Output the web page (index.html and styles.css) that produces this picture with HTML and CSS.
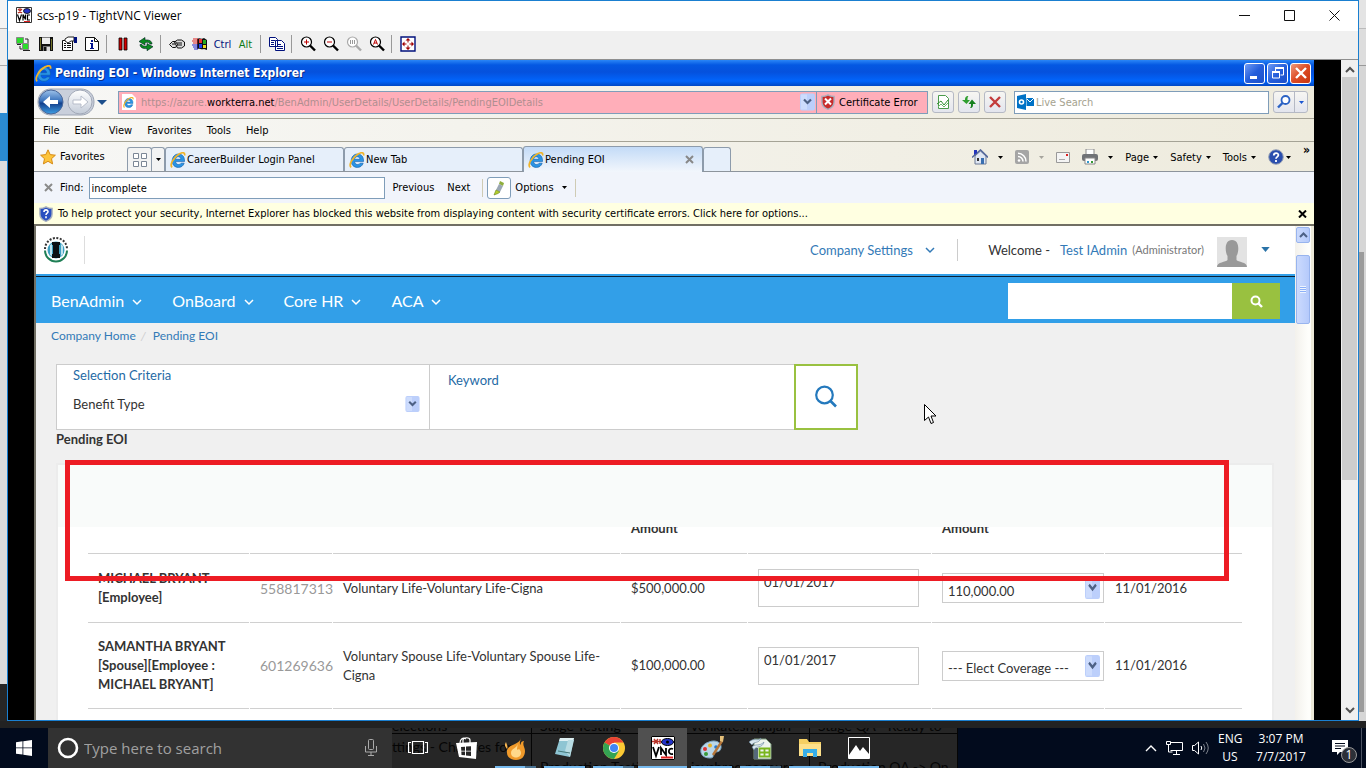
FILE: index.html
```html
<!DOCTYPE html>
<html lang="en">
<head>
    <meta charset="UTF-8">
    <meta name="viewport" content="width=device-width, initial-scale=1.0">
    <title>scs-p19 - TightVNC Viewer</title>
    <link rel="stylesheet" href="styles.css">
</head>
<body>
    <svg width="0" height="0" class="defs">
        <defs>
            <linearGradient id="g-ball" x1="0" y1="0" x2="0" y2="1"><stop offset="0" stop-color="#9fc3ea"/><stop offset=".45" stop-color="#3a73bd"/><stop offset=".55" stop-color="#123f8c"/><stop offset="1" stop-color="#3fa0e6"/></linearGradient>
            <linearGradient id="g-grey" x1="0" y1="0" x2="0" y2="1"><stop offset="0" stop-color="#fff"/><stop offset="1" stop-color="#c3cbd8"/></linearGradient>
        </defs>
        <symbol id="ie" viewBox="0 0 16 16">
            <path d="M14.500 9.600H5.600c.2 2.100 1.500 2.900 3 2.900 1.300 0 2.100-.5 2.500-1.300h3.100c-.9 2.700-2.900 4.200-5.800 4.200-3.800 0-6.200-2.700-6.200-6.500S4.700 2 8.400 2c3.900 0 6.500 2.800 6.100 7.600zM5.600 7.300h5.300C10.800 5.700 9.800 4.700 8.300 4.700S5.800 5.700 5.600 7.300z" fill="#2a94e4" stroke="#0e5cab" stroke-width=".6"/>
            <path d="M2.200 15.200C-1 13.500 3.500 5 9.500 1.800c3.200-1.700 5.800-1.500 5 1.700" fill="none" stroke="#f0b429" stroke-width="1.700"/>
        </symbol>
        <symbol id="chev" viewBox="0 0 10 10"><path d="M1 3l4 4 4-4" fill="none" stroke="currentColor" stroke-width="1.500"/></symbol>
        <symbol id="xpdown" viewBox="0 0 15 17">
            <rect x="0" y="0" width="15" height="17" rx="2" fill="#bccffb"/><rect x="1" y="1" width="6" height="15" fill="#cddcfd"/>
            <path d="M4 6l3.500 3.500L11 6" fill="none" stroke="#4d6185" stroke-width="2.200"/>
        </symbol>
        <symbol id="tri" viewBox="0 0 5 3"><path d="M0 0h5L2.500 3z" fill="currentColor"/></symbol>
        <symbol id="shield" viewBox="0 0 14 16">
            <path d="M7 .8C5 2 3 2.400.9 2.400V8c0 3.500 2.500 6 6.100 7.300C10.600 14 13.100 11.500 13.100 8V2.400C11 2.400 9 2 7 .8z" fill="currentColor" stroke="#a9b1bf" stroke-width="1.400"/>
        </symbol>
        <symbol id="lens" viewBox="0 0 16 16">
            <circle cx="6.500" cy="6" r="5" fill="#fff" stroke="currentColor" stroke-width="1.200"/><path d="M10 9.500l5 5" stroke="currentColor" stroke-width="2.400"/>
        </symbol>
    </svg>

    <div class="desktop">
        <div class="behind left"></div>

        <div class="vnc">
            <header class="vnc-title">
                <svg width="16" height="16" viewBox="0 0 16 16"><rect width="16" height="16" fill="#fff"/><path d="M.5.500h15v15H.5z" fill="none" stroke="#333"/><path d="M2 2l4 4M6 2L2 6M4 1v5" stroke="#b8342a" stroke-width="1.200"/><ellipse cx="11" cy="4" rx="3.500" ry="2.500" fill="#2433c8" stroke="#000" stroke-width=".8"/><path d="M1.500 7.500l2 6 2-6M7 13.500v-6l2.500 5v-5M14 8h-2.500v5H14" fill="none" stroke="#000" stroke-width="1.200"/><path d="M8 14.500h6" stroke="#e02020"/></svg>
                <span>scs-p19 - TightVNC Viewer</span>
                <div class="win-buttons">
                    <button aria-label="Minimize"><svg width="11" height="11"><path d="M0 5.500h11" stroke="#111"/></svg></button>
                    <button aria-label="Maximize"><svg width="11" height="11"><path d="M.5.500h10v10H.5z" fill="none" stroke="#111"/></svg></button>
                    <button aria-label="Close"><svg width="11" height="11"><path d="M.5.500l10 10M10.500.500l-10 10" stroke="#111"/></svg></button>
                </div>
            </header>

            <div class="vnc-tools">
                <button aria-label="New connection"><svg width="16" height="16"><path d="M1.500 1.500h7v6h-7zM7.500 7.500h6v6h-6z" fill="#2bdc2b" stroke="#888"/><path d="M2 8.500h4M10 3h3v4M5 10v3h2M8 14.500h7" fill="none" stroke="#222"/></svg></button>
                <button aria-label="Save"><svg width="16" height="16"><path d="M1 1h14v14H1z" fill="#111"/><path d="M4 1.500h8V8H4z" fill="#eee"/><path d="M2.500 2v12M13.500 3v11" stroke="#75752c"/><path d="M5 10.500h7V15H5z" fill="#ddd"/><path d="M5.500 11h3v4h-3z" fill="#111"/></svg></button>
                <button aria-label="Options"><svg width="16" height="16"><path d="M1.500 4.500h10v10h-10z" fill="#fff" stroke="#111"/><path d="M3 7.500h2M6 7.500h4M3 9.500h2M6 9.500h4M3 11.500h2M6 11.500h4" stroke="#111"/><path d="M4 3l3-2h6v4h-3L7 7 4 5z" fill="#fff" stroke="#222"/><path d="M13 1h3v6h-3z" fill="#00107c"/></svg></button>
                <button aria-label="Info"><svg width="16" height="16"><path d="M1.500 1.500h9l4 4v9h-13z" fill="#fff" stroke="#111"/><path d="M10.500 1.500v4h4" fill="none" stroke="#111"/><path d="M7 4h2v2H7zM6 7h3v5h1v1H6v-1h1V8H6z" fill="#00108c"/></svg></button>
                <span class="sep"></span>
                <button aria-label="Pause"><svg width="16" height="16"><path d="M4 2h3v12H4zM9 2h3v12H9z" fill="#d40000" stroke="#000" stroke-width=".8"/></svg></button>
                <button aria-label="Refresh"><svg width="16" height="16"><path d="M14 8c0-3-3-4.500-7-4V1.500L1 5.500 7 9V6.500c3-.4 4.500 0 5 1.500z" fill="#0a8a1e" stroke="#022" stroke-width=".6"/><path d="M2 8.500c0 3 3 4.500 7 4v2.200l6-4L9 7.500V10c-3 .4-4.500 0-5-1.500z" fill="#0a8a1e" stroke="#022" stroke-width=".6"/></svg></button>
                <span class="sep"></span>
                <button aria-label="Ctrl-Alt-Del"><svg width="16" height="16"><path d="M.5 8.500l3-3h3l2 3-2 3h-3zM5.500 6l3-2h4l3 2v4l-3 2h-4z" fill="#ddd" stroke="#111"/><path d="M8 7h5M8 9h5M3 8h3" stroke="#111"/></svg></button>
                <button aria-label="Ctrl-Esc"><svg width="16" height="16"><path d="M5 3c3-2 4 1 7-1l3 2v10l-3-1c-3 1-4-1-7 0z" fill="#111"/><path d="M7 3h3v4H7z" fill="#e33"/><path d="M11 4h3v4h-3z" fill="#2a2"/><path d="M7 8h3v4H7z" fill="#24e"/><path d="M11 9h3v3h-3z" fill="#ed2"/><path d="M1 3h5M0 5h6M1 7h5" stroke="#d22"/><path d="M0 9h6M1 11h5M2 13h4" stroke="#22c"/></svg></button>
                <button class="ctrl">Ctrl</button>
                <button class="alt">Alt</button>
                <span class="sep"></span>
                <button aria-label="Transfer files"><svg width="18" height="16"><path d="M1.500 1.500h6l2 2v7h-8zM7.500 4.500h6l3 3v7h-9z" fill="#fff" stroke="#00107c"/><path d="M3 4.500h4M3 6.500h3M3 8.500h3M9 8.500h4M9 10.500h6M9 12.500h6" stroke="#00107c"/></svg></button>
                <span class="sep"></span>
                <button aria-label="Zoom in"><svg width="16" height="16"><use href="#lens"/><path d="M4 6h5M6.500 3.500v5" stroke="#b00"/></svg></button>
                <button aria-label="Zoom out"><svg width="16" height="16"><use href="#lens"/><path d="M4 6h5" stroke="#b00"/></svg></button>
                <button class="off" aria-label="Zoom 100%"><svg width="16" height="16"><use href="#lens"/><path d="M4.500 4v4M6.500 4v4M8.500 4v4" stroke="#999"/></svg></button>
                <button aria-label="Zoom auto"><svg width="16" height="16"><use href="#lens"/><path d="M4.500 8.500l2-5 2 5M5 7h3" fill="none" stroke="#b00"/></svg></button>
                <span class="sep"></span>
                <button aria-label="Full screen"><svg width="16" height="16"><path d="M1 1h14v14H1z" fill="#fff" stroke="#00107c" stroke-width="1.400"/><path d="M8 2l2.500 2.500h-5zM8 14l2.500-2.500h-5zM2 8l2.500-2.500v5zM14 8l-2.500-2.500v5z" fill="#a00000"/><path d="M8 4v2.500M8 9.500V12M4 8h2.500M9.500 8H12" stroke="#a00000"/></svg></button>
            </div>

            <div class="vnc-view">
                <div class="remote">
                    <div class="ie-title">
                        <svg width="17" height="17"><use href="#ie"/></svg>
                        <b>Pending EOI - Windows Internet Explorer</b>
                        <div class="xp-buttons">
                            <button aria-label="Minimize"><svg width="20" height="20"><path d="M5 13h7v3H5z" fill="#fff"/></svg></button>
                            <button aria-label="Restore"><svg width="20" height="20"><path d="M7.500 8V5h8v7h-3M4.500 9h7v6h-7z" fill="none" stroke="#fff"/><path d="M4 9h8M7 5h9" stroke="#fff" stroke-width="2"/></svg></button>
                            <button class="close" aria-label="Close"><svg width="20" height="20"><path d="M5 5l10 10M15 5L5 15" stroke="#fff" stroke-width="2.400"/></svg></button>
                        </div>
                    </div>

                    <div class="ie-address">
                        <svg width="82" height="28" viewBox="0 0 82 28">
                            <path d="M14 1h30c7 0 13 5 13 13s-6 13-13 13H14C7 27 1 22 1 14S7 1 14 1z" fill="#c9cfdb" stroke="#9da5b4"/>
                            <circle cx="14" cy="14" r="12" fill="url(#g-ball)" stroke="#4a6799"/><circle cx="43" cy="14" r="12" fill="url(#g-grey)" stroke="#a2a9b8"/>
                            <path d="M6 14l7-6v4h8v4h-8v4z" fill="#fff"/>
                            <path d="M51 14l-7-6v4h-8v4h8v4z" fill="#fff" stroke="#b7bdca"/>
                            <path d="M60 12h10l-5 5z" fill="#1d4f8c"/>
                        </svg>
                        <div class="url">
                            <svg width="16" height="16"><path d="M1 0h10l4 4v12H1z" fill="#fff"/><use href="#ie" x="2" y="3" width="11" height="11"/></svg>
                            <span class="url-text">https://azure.<b>workterra.net</b>/BenAdmin/UserDetails/UserDetails/PendingEOIDetails</span>
                            <button aria-label="Show addresses"><svg width="15" height="18"><use href="#xpdown"/></svg></button>
                        </div>
                        <div class="cert">
                            <svg width="14" height="16" color="#c92b2b"><use href="#shield"/><path d="M4 4.500l6 6M10 4.500l-6 6" stroke="#fff" stroke-width="2"/></svg>
                            <span>Certificate Error</span>
                        </div>
                        <button class="sq" aria-label="Compatibility view"><svg width="16" height="16"><path d="M3.500 1.500h7l3 3v10h-10z" fill="#fff" stroke="#4a9b4a"/><path d="M2 10l4-3 3 4 4-5" fill="none" stroke="#2f8f2f"/><path d="M3 13l3-3 3 3 4-4" fill="none" stroke="#71b971"/></svg></button>
                        <button class="sq" aria-label="Refresh"><svg width="16" height="16"><path d="M7.500 2C4.500 2 4 4 4 6H1l4.500 4L9 6H6.500c0-2 0-3 1-4z" fill="#2f9f2f"/><path d="M9 14c3 0 3-2 3-4h3l-4-4.500L7.500 10H10c0 2 0 3-1 4z" fill="#17801f"/></svg></button>
                        <button class="sq" aria-label="Stop"><svg width="16" height="16"><path d="M3 3l10 10M13 3L3 13" stroke="#c33c3c" stroke-width="2.400"/></svg></button>
                        <label class="live">
                            <svg width="17" height="16"><path d="M0 2l9-2v16l-9-2z" fill="#0072c6"/><path d="M9.500 4H17v8H9.500z" fill="#0072c6"/><path d="M10 5l3 3 4-4" fill="none" stroke="#fff"/><circle cx="4.500" cy="8" r="2" fill="none" stroke="#fff" stroke-width="1.600"/></svg>
                            <input type="text" placeholder="Live Search" aria-label="Live Search">
                        </label>
                        <div class="go">
                            <button aria-label="Search"><svg width="16" height="16"><circle cx="9.500" cy="6" r="4" fill="#fff" stroke="#2b62c4" stroke-width="1.800"/><path d="M6.500 9L2 13.500" stroke="#2b62c4" stroke-width="2.400"/></svg></button>
                            <button aria-label="Search options"><svg width="5" height="3" color="#1c57d1"><use href="#tri"/></svg></button>
                        </div>
                    </div>

                    <nav class="ie-menu">
                        <a href="#">File</a><a href="#">Edit</a><a href="#">View</a><a href="#">Favorites</a><a href="#">Tools</a><a href="#">Help</a>
                    </nav>

                    <div class="ie-tabs">
                        <button class="fav"><svg width="16" height="16"><path d="M8 .8l2.200 4.800 5.200.6-3.900 3.500 1.100 5.200L8 12.300l-4.600 2.600 1.100-5.200L.6 6.200l5.200-.6z" fill="#fdc43a" stroke="#d68a14"/></svg>Favorites</button>
                        <button class="quick" aria-label="Quick tabs"><svg width="16" height="14"><path d="M1.500.5h5v5h-5zM9.500.5h5v5h-5zM1.500 8.500h5v5h-5zM9.500 8.500h5v5h-5z" fill="#fff" stroke="#7b8796"/></svg></button>
                        <button class="quick-more" aria-label="Tab list"><svg width="5" height="3"><use href="#tri"/></svg></button>
                        <a class="tab" href="#"><svg width="16" height="16"><use href="#ie"/></svg>CareerBuilder Login Panel</a>
                        <a class="tab" href="#"><svg width="16" height="16"><use href="#ie"/></svg>New Tab</a>
                        <a class="tab active" href="#"><svg width="16" height="16"><use href="#ie"/></svg>Pending EOI<svg class="tab-x" width="9" height="9"><path d="M1 1l7 7M8 1L1 8" stroke="#888" stroke-width="2"/></svg></a>
                        <button class="new-tab" aria-label="New tab"></button>
                        <div class="commands">
                            <button aria-label="Home"><svg width="16" height="16"><path d="M3 7v8h11V7L8.500 2z" fill="#dfe6f2" stroke="#6d7b96"/><path d="M0 8.500L8.500 1 16 8.500" fill="none" stroke="#55699c" stroke-width="1.600"/><path d="M2 1h3v3L2 6z" fill="#2233bb"/><path d="M9 9h3v6H9z" fill="#3a6fb0"/><path d="M5 9h2v3H5z" fill="#333"/></svg><svg width="5" height="3"><use href="#tri"/></svg></button>
                            <button class="faded" aria-label="Feeds"><svg width="14" height="14"><rect width="14" height="14" rx="2" fill="#a5a5a5"/><circle cx="4" cy="10.500" r="1.300" fill="#fff"/><path d="M3 6.500a5 5 0 015 5M3 3.300a8 8 0 018 8.200" fill="none" stroke="#fff" stroke-width="1.500"/></svg><svg width="5" height="3"><use href="#tri"/></svg></button>
                            <button aria-label="Read mail"><svg width="14" height="11"><path d="M.5.500h13v10H.5z" fill="#f4f4f4" stroke="#999"/><path d="M10 2h2v2h-2z" fill="#d22"/><path d="M3 7.500h6" stroke="#aaa"/></svg></button>
                            <button aria-label="Print"><svg width="16" height="16"><path d="M4 0h8v6H4z" fill="#fff" stroke="#888"/><rect y="5" width="16" height="7" rx="2" fill="#707276"/><path d="M3 9h10v6H3z" fill="#fff" stroke="#888"/><path d="M5 12h2v2H5z" fill="#39c"/><path d="M9 12h2v2H9z" fill="#393"/></svg><svg width="5" height="3"><use href="#tri"/></svg></button>
                            <button>Page<svg width="5" height="3"><use href="#tri"/></svg></button>
                            <button>Safety<svg width="5" height="3"><use href="#tri"/></svg></button>
                            <button>Tools<svg width="5" height="3"><use href="#tri"/></svg></button>
                            <button class="help" aria-label="Help"><svg width="16" height="16"><circle cx="8" cy="8" r="7.300" fill="#2b4fae" stroke="#9aa3b5"/><path d="M5.800 6.500c0-3 4.600-3 4.600-.4C10.400 8 8 7.800 8 9.800M8 11v2" fill="none" stroke="#fff" stroke-width="1.800"/></svg><svg width="5" height="3"><use href="#tri"/></svg></button>
                            <b class="more">»</b>
                        </div>
                    </div>

                    <div class="ie-find">
                        <button aria-label="Close find bar"><svg width="9" height="9"><path d="M1 1l7 7M8 1L1 8" stroke="#8b8b8b" stroke-width="2"/></svg></button>
                        <label for="find">Find:</label>
                        <input id="find" type="text" value="incomplete">
                        <button class="prev">Previous</button>
                        <button class="next">Next</button>
                        <button class="pen" aria-label="Highlight"><svg width="16" height="16"><path d="M9 1l4 2-1 3-4-2z" fill="#8fae3c"/><path d="M8 4l4 2-3 6-4-2z" fill="#9aa7b3"/><path d="M5 10l4 2-2 1.500L3 15z" fill="#b4cf2c" stroke="#66811a" stroke-width=".6"/></svg></button>
                        <button class="opts">Options<svg width="5" height="3"><use href="#tri"/></svg></button>
                    </div>

                    <div class="ie-info">
                        <svg width="14" height="16" color="#2a50c0"><use href="#shield"/><path d="M5 6c0-2.800 4-2.800 4-.3C9 7.300 7 7.200 7 9M7 10.300v2" fill="none" stroke="#fff" stroke-width="1.600"/></svg>
                        <span>To help protect your security, Internet Explorer has blocked this website from displaying content with security certificate errors. Click here for options...</span>
                        <button aria-label="Close"><svg width="9" height="8"><path d="M1 .5l7 7M8 .5l-7 7" stroke="#000" stroke-width="2"/></svg></button>
                    </div>

                    <div class="ie-body">
                        <main class="page">
                            <header class="site-top">
                                <svg class="logo" width="26" height="26" viewBox="0 0 26 26"><circle cx="13" cy="13" r="11" fill="#fff"/><circle cx="13" cy="13" r="8.500" fill="#3d9fc0"/><path d="M2 12a11 11 0 0122 0" fill="none" stroke="#333" stroke-width="2" stroke-dasharray="2 1.500"/><path d="M2 13.500a11 11 0 0022 0" fill="none" stroke="#1f7f56" stroke-width="2"/><path d="M7 8l2-1v12l-2-1zM18 7l2 2v8l-2 2z" fill="#bfe3ef"/><path d="M9 5h8v3h-1v9h1v4H9v-4h1V8H9z" fill="#0c1014"/></svg>
                                <div class="account">
                                    <a class="company" href="#">Company Settings <svg width="10" height="10"><use href="#chev"/></svg></a>
                                    <span class="welcome">Welcome -</span>
                                    <a href="#">Test IAdmin</a>
                                    <small>(Administrator)</small>
                                    <svg class="avatar" width="30" height="30" viewBox="0 0 30 30"><rect width="30" height="30" fill="#e3e3e3"/><path d="M0 30c0-5 9-5 10.500-7v-4C8 15 7 3 15 3s7 12 4.500 16v4C21 25 30 25 30 30z" fill="#999"/></svg>
                                    <svg width="9" height="5" color="#2a73a8"><use href="#tri"/></svg>
                                </div>
                            </header>

                            <nav class="site-nav">
                                <a href="#">BenAdmin <svg width="10" height="10"><use href="#chev"/></svg></a>
                                <a href="#">OnBoard <svg width="10" height="10"><use href="#chev"/></svg></a>
                                <a href="#">Core HR <svg width="10" height="10"><use href="#chev"/></svg></a>
                                <a href="#">ACA <svg width="10" height="10"><use href="#chev"/></svg></a>
                                <form class="site-search">
                                    <input type="text" aria-label="Search site">
                                    <button type="button" aria-label="Search"><svg width="13" height="13"><circle cx="5.500" cy="5.500" r="4" fill="none" stroke="#fff" stroke-width="2"/><path d="M8.500 8.500l3.500 3.500" stroke="#fff" stroke-width="2.400"/></svg></button>
                                </form>
                            </nav>

                            <div class="crumbs"><a href="#">Company Home</a><i>/</i><a href="#">Pending EOI</a></div>

                            <form class="filter">
                                <div class="criteria">
                                    <label for="criteria">Selection Criteria</label>
                                    <div class="pick">
                                        <select id="criteria"><option>Benefit Type</option></select>
                                        <svg width="15" height="16"><use href="#xpdown"/></svg>
                                    </div>
                                </div>
                                <div class="keyword">
                                    <label for="keyword">Keyword</label>
                                    <input id="keyword" type="text">
                                </div>
                                <button type="button" aria-label="Search"><svg width="24" height="24"><circle cx="10.500" cy="10" r="8.300" fill="none" stroke="#2479bd" stroke-width="2.200"/><path d="M16 15.500l6 6" stroke="#2479bd" stroke-width="2.600"/></svg></button>
                            </form>

                            <h2>Pending EOI</h2>

                            <section class="panel">
                                <div class="panel-head"></div>
                                <table>
                                    <colgroup><col class="c-name"><col class="c-id"><col><col class="c-amount"><col class="c-date"><col class="c-elect"><col class="c-sent"></colgroup>
                                    <thead>
                                        <tr><th></th><th></th><th></th><th>Amount</th><th></th><th>Amount</th><th></th></tr>
                                    </thead>
                                    <tbody>
                                        <tr>
                                            <td class="name">MICHAEL BRYANT [Employee]</td>
                                            <td class="id">558817313</td>
                                            <td>Voluntary Life-Voluntary Life-Cigna</td>
                                            <td>$500,000.00</td>
                                            <td><input type="text" value="01/01/2017" aria-label="Effective date"></td>
                                            <td class="elect"><div class="pick boxed"><select aria-label="Elected amount"><option>110,000.00</option></select><svg width="15" height="22" viewBox="0 0 15 17" preserveAspectRatio="none"><use href="#xpdown"/></svg></div></td>
                                            <td>11/01/2016</td>
                                        </tr>
                                        <tr>
                                            <td class="name">SAMANTHA BRYANT [Spouse][Employee : MICHAEL BRYANT]</td>
                                            <td class="id">601269636</td>
                                            <td>Voluntary Spouse Life-Voluntary Spouse Life-Cigna</td>
                                            <td>$100,000.00</td>
                                            <td><input type="text" value="01/01/2017" aria-label="Effective date"></td>
                                            <td class="elect"><div class="pick boxed"><select aria-label="Elected amount"><option>--- Elect Coverage ---</option></select><svg width="15" height="22" viewBox="0 0 15 17" preserveAspectRatio="none"><use href="#xpdown"/></svg></div></td>
                                            <td>11/01/2016</td>
                                        </tr>
                                    </tbody>
                                </table>
                                <div class="highlight"></div>
                            </section>

                            <svg class="cursor" width="13" height="21"><path d="M.5.500v16l4-3.500 2.500 6.500 2.500-1L7 12h5z" fill="#fff" stroke="#000"/></svg>
                        </main>
                        <div class="xp-scroll">
                            <button aria-label="Scroll up"><svg width="9" height="6"><path d="M1 5l3.500-3.500L8 5" fill="none" stroke="#4d6185" stroke-width="2"/></svg></button>
                            <div class="xp-thumb"></div>
                        </div>
                    </div>
                </div>

                <div class="vnc-scroll">
                    <svg width="10" height="7"><path d="M1 6l4-4 4 4" fill="none" stroke="#505050" stroke-width="2"/></svg>
                    <div class="vnc-thumb"></div>
                    <svg width="10" height="7"><path d="M1 1l4 4 4-4" fill="none" stroke="#505050" stroke-width="2"/></svg>
                </div>
            </div>
        </div>

        <div class="behind right"><div></div></div>
    </div>

    <footer class="taskbar">
        <button class="start" aria-label="Start"><svg width="16" height="16"><path d="M0 2.300l6.500-1v6.200H0zM7.300 1.200L16 0v7.500H7.300zM0 8.300h6.500v6.300L0 13.700zM7.300 8.300H16V16l-8.700-1.300z" fill="#fff"/></svg></button>
        <label class="search">
            <svg width="22" height="22"><circle cx="11" cy="11" r="9" fill="none" stroke="#fff" stroke-width="2.600"/></svg>
            <input type="text" placeholder="Type here to search">
            <svg width="12" height="18"><rect x="3.500" y=".5" width="5" height="10" rx="1" fill="none" stroke="#aaa"/><path d="M.5 7v6h11V7M6 13v4M3 16.500h6" fill="none" stroke="#aaa"/></svg>
        </label>
        <div class="apps">
            <div class="sheet" aria-hidden="true">
                <span>elections</span><span>Stage Testing</span><span>venkatesh.pujari</span><span>Stage QA - Ready to</span>
                <span>ttings - Changes for</span><span></span><span></span><span></span>
                <span></span><span>Production Testing</span><span>jayshree.nagpure</span><span>Production QA -&gt; On</span>
            </div>
            <button aria-label="Task view"><svg width="20" height="16"><path d="M4.500 1.500h11v12h-11zM3 2.500H.5v10H3M17 2.500h2.500v10H17" fill="none" stroke="#fff" stroke-width="1.200"/></svg></button>
            <button aria-label="Store"><svg width="22" height="24"><path d="M7 7V4c0-3 7-3 7 0v3M4 7c0-4 3-6 6-4" fill="none" stroke="#fff" stroke-width="1.200"/><path d="M0 7l21-1-1 17-17-2z" fill="#fff"/><path d="M5 11l4-.3v4H5.300zM10 10.600l5-.4v4.500h-5zM5.300 15.500H9v3.800L5.500 19zM10 15.500h5V20l-5-.6z" fill="#262626"/></svg></button>
            <button class="open more" aria-label="Burn"><svg width="22" height="24"><path d="M15 0c2 4-1 6-5 8-5 2-9 4-8 9 0 4 4 7 9 7 6 0 9-4 9-9 0-4-3-6-1-10-2 0-4 2-3 4-3-2 1-5-1-9z" fill="#f09a2a"/><path d="M1 6c-2 3-1 5 1 7 1-2 0-4-1-7z" fill="#f6b450"/><path d="M12 8c1 4-6 4-6 9 0 6 10 6 10 0 0-2-1-3-2-4-1 1-2 1-2 0 0-2 1-3 0-5z" fill="#ffd98a"/></svg></button>
            <button class="open" aria-label="Notepad"><svg width="22" height="22"><path d="M6 1h14l-4 19-15-3z" fill="#8ec5d3"/><path d="M6 1h14l-1 3H5z" fill="#dff0f3"/><path d="M14 3h6l-4 17-5-6z" fill="#b8dce3"/><path d="M4 14l12 2" stroke="#477"/></svg></button>
            <button class="open more" aria-label="Chrome"><svg width="22" height="22" viewBox="0 0 22 22"><circle cx="11" cy="11" r="11" fill="#fcc934"/><path d="M11 11L1.500 5.500A11 11 0 0120.500 5.500H11z" fill="#e94335"/><path d="M11 11L1.500 5.500A11 11 0 0011 22l4.800-8z" fill="#34a353"/><circle cx="11" cy="11" r="5" fill="#fff"/><circle cx="11" cy="11" r="4" fill="#4285f4"/></svg></button>
            <button class="open current" aria-label="TightVNC"><svg width="24" height="24"><rect width="24" height="24" fill="#fff"/><path d="M.5.500h23v23H.5z" fill="none" stroke="#000"/><path d="M3 3l4 5M7 3L3 8M1 5.500h9M9 3v5" stroke="#b8342a" stroke-width="1.400"/><ellipse cx="16.500" cy="6" rx="6" ry="3.500" fill="#2433c8" stroke="#000"/><circle cx="16.500" cy="6" r="1.500"/><path d="M2 11l3 9 3-9M10 19v-7l5 7v-7M22 13c-5-2-6 6 0 5" fill="none" stroke="#000" stroke-width="1.800"/><path d="M10 21.500h12" stroke="#e02020" stroke-width="2"/></svg></button>
            <button class="open" aria-label="Paint"><svg width="24" height="24"><path d="M9 6c7-3 13 1 12 6s-5 3-7 5 1 5-4 5C3 22 0 18 1 13c1-3 4-6 8-7z" fill="#b9d7ea" stroke="#7ca5c2"/><circle cx="5" cy="13" r="2" fill="#d33"/><circle cx="10" cy="9.500" r="2" fill="#e8b52a"/><circle cx="6" cy="18" r="2" fill="#3a9b3a"/><circle cx="16" cy="11" r="1.800" fill="#27c"/><path d="M22 5l-9 14" stroke="#b5763a" stroke-width="2.400"/><path d="M20 0h4l-1 6-3-1z" fill="#e5c07a"/></svg></button>
            <button class="open more" aria-label="LibreOffice"><svg width="24" height="24"><path d="M5 3h12l5 5v15H5z" fill="#eef3ee" stroke="#7d9a7d"/><path d="M5 12h4v11H5z" fill="#55687a"/><path d="M10.500 12.500h10v8h-10zM10.500 16.500h10M15.500 12.500v8" fill="none" stroke="#7ab51d" stroke-width="1.800"/><path d="M0 6c5-5 8 0 12-4-2 6-7 3-9 7zM3 11c4-4 7 0 12-5-2 7-8 3-10 8z" fill="#d8e6ef" stroke="#67839a" stroke-width=".6"/></svg></button>
            <button class="open" aria-label="File Explorer"><svg width="22" height="20"><path d="M0 1h8l2 3h12v14H0z" fill="#f5cf62"/><path d="M0 6h22v12H0z" fill="#fde08a"/><path d="M4 11h14v8h-4v-4H8v4H4z" fill="#37aee8"/></svg></button>
            <button class="open" aria-label="Photos"><svg width="22" height="22"><path d="M.5.500h21v21H.5z" fill="#222" stroke="#fff"/><path d="M1 18l7-10 4 6 3-4 6 7v4H1z" fill="#fff"/></svg></button>
        </div>
        <div class="tray">
            <button aria-label="Show hidden icons"><svg width="12" height="8"><path d="M1 7l5-5 5 5" fill="none" stroke="#fff" stroke-width="1.400"/></svg></button>
            <svg width="17" height="14"><path d="M4.500 1.500h12v8h-12M10.500 10v3M7 13.500h7M2.500 4v7h4M.5.500h4v3h-4z" fill="none" stroke="#fff"/></svg>
            <svg width="17" height="14"><path d="M.5 4.500h2l4-3.500v12l-4-3.500h-2z" fill="none" stroke="#fff"/><path d="M9 5q1.500 2 0 4" fill="none" stroke="#fff"/><path d="M11.500 3q3 4 0 8M14 1q4.500 6 0 12" fill="none" stroke="#7d828c"/></svg>
            <div class="lang">ENG<br>US</div>
            <div class="clock">3:07 PM<br>7/7/2017</div>
            <button class="notify" aria-label="Notifications"><svg width="17" height="16"><path d="M0 0h16v12H8l-3 3v-3H0z" fill="#fff"/><path d="M3 3.500h10M3 6h10M3 8.500h6" stroke="#020b1d"/></svg><span>1</span></button>
        </div>
    </footer>
</body>
</html>
```
FILE: styles.css
```css
* {
    box-sizing: border-box;
}
body {
    margin: 0;
    height: 100vh;
    display: flex;
    flex-direction: column;
    overflow: hidden;
    background: #222;
    font-family: "DejaVu Sans Condensed", "DejaVu Sans", sans-serif;
    font-size: 11px;
    color: #000;
}
.defs {
    position: absolute;
}
a {
    color: inherit;
    text-decoration: none;
}
button {
    font: inherit;
    color: inherit;
    background: none;
    border: 0;
    padding: 0;
    display: flex;
    align-items: center;
    justify-content: center;
    white-space: nowrap;
}
input, select {
    font: inherit;
    color: inherit;
    border: 0;
    border-radius: 0;
    background: none;
    padding: 0;
    margin: 0;
    min-width: 0;
    appearance: none;
    outline: 0;
}
svg {
    flex: none;
}

/* desktop behind the viewer */
.desktop {
    flex: 1;
    min-height: 0;
    display: flex;
    padding-bottom: 7px;
}
.behind {
    width: 7px;
    background: #d9d9d9;
}
.behind.left {
    background: linear-gradient(#f4f4f4 28px, #aaa 28px, #aaa 29px, #eee 29px, #eee 65px, #aaa 65px, #aaa 66px, #ececec 66px, #ececec 113px, #2b8bd2 113px, #2b8bd2 161px, #dcdcdc 161px, #dcdcdc 684px, #262626 684px);
}
.behind.right {
    padding-top: 252px;
    background: linear-gradient(#e4e4e4 28px, #bbb 28px, #bbb 29px, #ddd 29px, #ddd 65px, #999 65px, #999 66px, #d6d6d6 66px);
}
.behind.right div {
    height: 460px;
    margin-right: 2px;
    background: #9b9b9b;
}

/* tightvnc window */
.vnc {
    flex: 1;
    min-width: 0;
    display: flex;
    flex-direction: column;
    border: 1px solid #1a7fd0;
    background: #fff;
}
.vnc-title {
    height: 30px;
    display: flex;
    align-items: center;
    gap: 5px;
    padding: 0 1px 2px 8px;
    font-family: "Open Sans", sans-serif;
    font-size: 12px;
}
.win-buttons {
    display: flex;
    margin-left: auto;
}
.win-buttons button {
    width: 45px;
    height: 28px;
}
.vnc-tools {
    height: 29px;
    display: flex;
    align-items: center;
    padding: 0 3px 2px;
    background: #f0f0f0;
    border-bottom: 1px solid #8f8f8f;
}
.vnc-tools button {
    width: 23px;
    height: 22px;
}
.vnc-tools .sep {
    width: 8px;
    height: 18px;
    background: linear-gradient(90deg, transparent 3px, #999 3px, #999 4px, transparent 4px);
}
.vnc-tools .ctrl {
    color: #00107c;
}
.vnc-tools .alt {
    color: #0a7a14;
}
.vnc-tools .off {
    color: #aaa;
}
.vnc-view {
    flex: 1;
    min-height: 0;
    display: flex;
    padding-left: 26px;
    background: #000;
}
.vnc-scroll {
    width: 17px;
    margin-left: 27px;
    padding: 6px 0;
    display: flex;
    flex-direction: column;
    align-items: center;
    background: #f0f0f0;
}
.vnc-thumb {
    width: 15px;
    height: 403px;
    margin: 4px 0 auto;
    background: #cdcdcd;
}

/* internet explorer on the remote machine */
.remote {
    flex: 1;
    min-width: 0;
    display: flex;
    flex-direction: column;
    background: #f0eee2;
}
.ie-title {
    height: 26px;
    display: flex;
    align-items: center;
    gap: 3px;
    padding: 0 3px 0 1px;
    color: #fff;
    font-size: 12px;
    text-shadow: 1px 1px #0a2f8a;
    background: linear-gradient(#2a86f7, #0458e2 5px, #0551dd 12px, #0165fc 21px, #0148c4);
}
.xp-buttons {
    display: flex;
    gap: 2px;
    margin-left: auto;
}
.xp-buttons button {
    width: 21px;
    height: 21px;
    border: 1px solid #fff;
    border-radius: 3px;
    background: linear-gradient(135deg, #6f9bf5, #245edb 50%, #1c50c9);
}
.xp-buttons .close {
    background: linear-gradient(135deg, #f09a7d, #dd4b24 50%, #c8360f);
}
.ie-address {
    height: 33px;
    display: flex;
    align-items: center;
    gap: 4px;
    padding: 0 6px 0 3px;
    background: linear-gradient(90deg, #f7f7f5, #eeebdd);
    border-bottom: 1px solid #a5a396;
}
.ie-address > svg {
    margin-right: -5px;
}
.url {
    flex: 1;
    height: 23px;
    display: flex;
    align-items: center;
    gap: 4px;
    padding: 0 1px 0 2px;
    background: #ffaeb9;
    border: 1px solid #7f9db9;
}
.url-text {
    flex: 1;
    color: #b08e90;
}
.url-text b {
    color: #000;
    font-weight: normal;
}
.cert {
    width: 112px;
    height: 23px;
    margin-left: -5px;
    padding-left: 4px;
    display: flex;
    align-items: center;
    gap: 4px;
    white-space: nowrap;
    background: #ffaeb9;
    border: 1px solid #7f9db9;
}
.sq, .go {
    width: 22px;
    height: 22px;
    border: 1px solid #b5b9c4;
    border-radius: 3px;
    background: linear-gradient(#f7f6f2, #e3e5ee);
}
.live {
    width: 255px;
    height: 23px;
    margin-left: 4px;
    padding-left: 2px;
    display: flex;
    align-items: center;
    gap: 2px;
    background: #fff;
    border: 1px solid #7f9db9;
}
.live input::placeholder {
    color: #a5a28f;
}
.go {
    width: 35px;
    display: flex;
}
.go button {
    flex: 1;
    border-left: 1px solid #b5b9c4;
}
.go button:first-child {
    flex: none;
    width: 20px;
    border: 0;
}
.ie-menu {
    height: 23px;
    display: flex;
    align-items: center;
    gap: 15px;
    padding: 1px 0 0 9px;
    background: linear-gradient(90deg, #f7f7f5, #eeebdd);
    border-bottom: 1px solid #a5a396;
}
.ie-tabs {
    height: 30px;
    display: flex;
    align-items: flex-end;
    background: linear-gradient(90deg, #f7f7f5, #eeebdd);
    border-bottom: 1px solid #8d949c;
}
.fav {
    width: 93px;
    height: 29px;
    gap: 4px;
    padding-left: 6px;
    justify-content: flex-start;
}
.quick, .quick-more, .new-tab, .tab {
    height: 24px;
    border: 1px solid #8d9bab;
    border-bottom: 0;
    border-radius: 3px 3px 0 0;
    background: #e6effa;
}
.quick {
    width: 25px;
    background: #f2f3f3;
}
.quick-more {
    width: 14px;
    margin-left: -1px;
    background: #f2f3f3;
}
.tab {
    width: 179px;
    display: flex;
    align-items: center;
    gap: 1px;
    padding-left: 4px;
    white-space: nowrap;
}
.tab.active {
    height: 26px;
    width: 180px;
    margin-bottom: -1px;
    background: linear-gradient(#c3dbf7, #f2f6fc);
}
.tab-x {
    margin: 0 8px 0 auto;
}
.new-tab {
    width: 28px;
}
.commands {
    flex: 1;
    height: 28px;
    display: flex;
    align-items: center;
    justify-content: flex-end;
    gap: 12px;
    padding-right: 4px;
}
.commands button {
    gap: 4px;
}
.commands button:nth-child(-n+4) {
    gap: 10px;
}
.commands .help {
    gap: 2px;
}
.commands .faded svg:last-child {
    opacity: 0.3;
}
.commands .more {
    align-self: flex-start;
    font-size: 12px;
}
.ie-find {
    height: 31px;
    display: flex;
    align-items: center;
    padding-left: 10px;
    background: #f1f4fb;
}
.ie-find label {
    margin: 0 5px 0 7px;
}
.ie-find input {
    width: 296px;
    height: 22px;
    padding: 2px 2px 0;
    background: #fff;
    border: 1px solid #7f9db9;
}
.ie-find .prev {
    margin-left: 8px;
}
.ie-find .next {
    height: 18px;
    margin-left: 13px;
    padding-right: 12px;
    border-right: 1px solid #cfcbb4;
}
.ie-find .pen {
    width: 24px;
    height: 22px;
    margin: 0 4px;
    background: #fff;
    border: 1px solid #7f9db9;
    border-radius: 3px;
}
.ie-find .opts {
    height: 18px;
    gap: 8px;
    padding-right: 8px;
    border-right: 1px solid #cfcbb4;
}
.ie-info {
    height: 21px;
    display: flex;
    align-items: center;
    gap: 5px;
    padding: 0 7px 0 5px;
    background: #ffffe1;
    white-space: nowrap;
}
.ie-info button {
    margin-left: auto;
}
.ie-body {
    flex: 1;
    min-height: 0;
    display: flex;
    border: solid #716f64;
    border-width: 2px 0 0 2px;
}

/* xp scroll bar */
.xp-scroll {
    width: 19px;
    padding: 1px 4px 0 1px;
    background: linear-gradient(90deg, #f3f1ec, #fefefb 13px, #fefefb 16px, #ece9d8 16px);
}
.xp-scroll button, .xp-thumb {
    width: 14px;
    height: 16px;
    border: 1px solid #98b4ee;
    border-radius: 2px;
    background: linear-gradient(90deg, #cbdafd, #b5cafb);
}
.xp-thumb {
    height: 69px;
    margin-top: 12px;
    padding: 30px 3px;
    background-image: repeating-linear-gradient(#eef4fe 0, #eef4fe 1px, #8cb0f8 1px, #8cb0f8 2px), linear-gradient(90deg, #cbdafd, #b5cafb);
    background-clip: content-box, border-box;
}

/* the web page */
.page {
    position: relative;
    flex: 1;
    min-width: 0;
    overflow: hidden;
    background: #f0f0f0;
    font-family: Lato, sans-serif;
    font-size: 13px;
    color: #333;
}
.site-top {
    height: 48px;
    display: flex;
    align-items: center;
    padding: 0 25px 1px 7px;
    background: #fff;
}
.logo {
    width: 26px;
    height: 28px;
    padding-right: 15px;
    border-right: 1px solid #ddd;
    box-sizing: content-box;
}
.account {
    display: flex;
    align-items: center;
    margin-left: auto;
    white-space: nowrap;
}
.account a, .crumbs a {
    color: #337ab7;
}
.account .company {
    height: 22px;
    line-height: 22px;
    margin-right: 30px;
    padding-right: 22px;
    border-right: 1px solid #ccc;
}
.company svg {
    margin-left: 9px;
}
.welcome {
    margin-right: 10px;
}
.account small {
    margin-left: 5px;
    font-size: 11px;
    color: #777;
}
.avatar {
    margin: 4px 14px 0 13px;
}
.site-nav {
    height: 49px;
    display: flex;
    align-items: center;
    gap: 30px;
    padding: 5px 15px 0;
    background: linear-gradient(#329fe8 2px, #0b2136 2px, #0b2136 3px, #329fe8 3px);
    color: #fff;
    font-size: 16px;
    white-space: nowrap;
}
.site-nav a {
    padding-bottom: 2px;
}
.site-nav a svg {
    margin-left: 4px;
}
.site-search {
    display: flex;
    height: 36px;
    width: 272px;
    margin-left: auto;
}
.site-search input {
    flex: 1;
    background: #fff;
}
.site-search button {
    width: 48px;
    background: #99c140;
}
.crumbs {
    padding: 4px 15px 0;
    line-height: 18px;
    font-size: 12px;
}
.crumbs i {
    margin: 0 7px 0 5px;
    color: #ccc;
}
.filter {
    display: flex;
    max-width: 802px;
    height: 66px;
    margin: 19px 20px 0;
    background: #fff;
}
.filter label {
    color: #1f6aa5;
}
.criteria, .keyword {
    flex: 1;
    border: 1px solid #ccc;
    border-right: 0;
}
.criteria {
    flex: none;
    width: 373px;
    padding: 1px 9px 0 16px;
}
.criteria label, .criteria select {
    display: block;
    height: 18px;
    line-height: 18px;
}
.criteria .pick {
    margin-top: 11px;
}
.keyword {
    padding: 6px 18px;
}
.keyword label {
    display: block;
    line-height: 18px;
}
.keyword input {
    width: 100%;
}
.filter button {
    width: 64px;
    border: 2px solid #99c140;
}
.pick {
    position: relative;
}
.pick select {
    width: 100%;
}
.pick svg {
    position: absolute;
    right: 0;
    top: 1px;
    pointer-events: none;
}
h2 {
    margin: 0 20px;
    font-size: 13px;
    line-height: 18px;
}
.panel {
    position: relative;
    margin: 15px 21px 0 20px;
    padding: 0 29px 60px;
    border: 2px solid #ececec;
    background: #fff;
}
.panel-head {
    position: absolute;
    left: 0;
    right: 0;
    top: 0;
    height: 62px;
    background: #f9fbfa;
}
.highlight {
    position: absolute;
    left: 7px;
    right: 43px;
    top: -5px;
    height: 121px;
    border: 5px solid #ed1c24;
}
.panel table {
    width: 100%;
    table-layout: fixed;
    border-collapse: separate;
    border-spacing: 1px 0;
    line-height: 19px;
}
.c-name { width: 161px; }
.c-id { width: 82px; }
.c-amount { width: 126px; }
.c-date { width: 183px; }
.c-elect { width: 172px; }
.c-sent { width: 137px; }
.panel th, .panel td {
    height: 69px;
    padding: 14px 10px;
    border-bottom: 1px solid #d0d0d0;
    text-align: left;
}
.panel th {
    height: 89px;
    padding-bottom: 15px;
    vertical-align: bottom;
}
.panel td.name {
    font-weight: bold;
}
.panel td.id {
    padding-right: 0;
    font-size: 14px;
    color: #999;
}
.panel td.elect {
    padding-right: 0;
}
.panel td input {
    display: block;
    width: 161px;
    height: 38px;
    padding: 0 5px 12px;
    background: #fff;
    border: 1px solid #ccc;
}
.boxed select {
    display: block;
    height: 30px;
    padding: 6px 5px 0;
    border: 1px solid #ccc;
}
.boxed svg {
    right: 4px;
    top: 4px;
}
.cursor {
    position: absolute;
    left: 888px;
    top: 178px;
}

/* taskbar */
.taskbar {
    height: 40px;
    display: flex;
    background: #020b1d;
    color: #fff;
    font-family: "Open Sans", sans-serif;
}
.start {
    width: 48px;
}
.search {
    width: 344px;
    display: flex;
    align-items: center;
    gap: 5px;
    padding: 0 15px 0 9px;
    background: #323232;
}
.search input {
    flex: 1;
    font-size: 15px;
}
.search input::placeholder {
    color: #a0a0a0;
}
.apps {
    position: relative;
    width: 566px;
    display: flex;
    padding-left: 1px;
    background: #262626;
    overflow: hidden;
}
.sheet {
    position: absolute;
    inset: 0;
    display: grid;
    grid-template: 6px 26px 14px / 140px 151px 127px 1fr;
    font-family: Lato, sans-serif;
    font-size: 14px;
    line-height: 14px;
    color: #050505;
    white-space: nowrap;
}
.sheet span {
    display: flex;
    align-items: center;
    padding-left: 8px;
    border-right: 1px solid #050505;
}
.sheet span:last-child, .sheet span:nth-child(4) {
    overflow: hidden;
}
.sheet span:nth-child(-n+4) {
    align-items: flex-end;
    border-bottom: 1px solid #050505;
}
.sheet span:nth-child(4n+1) {
    padding-left: 0;
}
.apps button {
    position: relative;
    width: 49px;
}
.apps .open {
    border-bottom: 2px solid #76b9ed;
    background-clip: padding-box;
    margin: 0 4px;
    width: 41px;
    padding-top: 2px;
}
.apps .more {
    border-image: linear-gradient(90deg, #76b9ed 30px, #4a7393 30px) 1;
    border-width: 0 0 2px;
}
.apps .current {
    width: 49px;
    margin: 0;
    background-color: #505050;
}
.tray {
    flex: 1;
    display: flex;
    align-items: center;
    justify-content: flex-end;
    gap: 9px;
    padding-right: 4px;
    font-size: 12px;
    line-height: 18px;
    text-align: center;
}
.lang {
    width: 24px;
}
.clock {
    width: 60px;
}
.notify {
    position: relative;
    width: 42px;
    height: 40px;
    border-right: 1px solid #4b5261;
}
.notify span {
    position: absolute;
    right: 4px;
    top: 19px;
    width: 16px;
    height: 16px;
    line-height: 14px;
    border: 1px solid #999;
    border-radius: 50%;
    background: #2c3038;
}
```
